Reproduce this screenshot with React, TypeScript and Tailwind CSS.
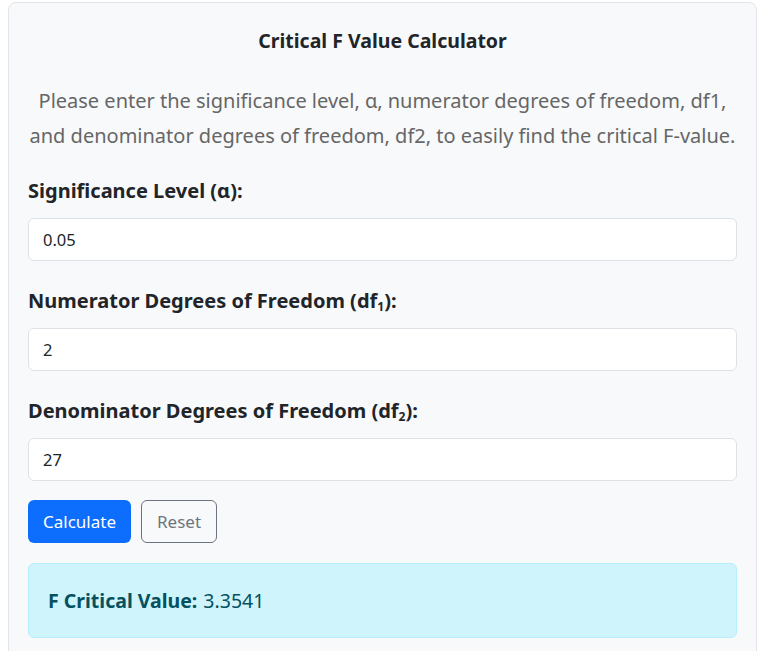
import { useState } from "react";

const font = { fontFamily: '"Noto Sans", "Open Sans", sans-serif' };

function Field({ label, value, onChange, last }: { label: React.ReactNode; value: string; onChange: (v: string) => void; last?: boolean }) {
  return (
    <div className={last ? "mb-[19px]" : "mb-[28px]"}>
      <label className="block text-[20px] leading-[24px] font-bold text-[#212529] mb-[15px]">{label}</label>
      <input
        value={value}
        onChange={(e) => onChange(e.target.value)}
        className="block w-full h-[43px] px-[14px] text-[16.5px] text-[#212529] bg-white border border-[#dee2e6] rounded-[6px] outline-none"
      />
    </div>
  );
}

export default function App() {
  const [alpha, setAlpha] = useState("0.05");
  const [df1, setDf1] = useState("2");
  const [df2, setDf2] = useState("27");

  return (
    <div className="min-h-screen bg-white pt-[2px] px-[8px]" style={font}>
      <div className="w-[749px] bg-[#f8f9fa] border border-[#e3e5e8] rounded-[8px] px-[19px] pt-[26px] pb-[20px]">
        <h2 className="text-center text-[19.5px] leading-[24px] font-bold text-[#212529] mb-[30px]">
          Critical F Value Calculator
        </h2>
        <p className="text-center text-[20px] leading-[35px] text-[#666666] mb-[26px]">
          Please enter the significance level, α, numerator degrees of freedom, df1, and denominator degrees of freedom, df2, to easily find the critical F-value.
        </p>
        <Field label="Significance Level (α):" value={alpha} onChange={setAlpha} />
        <Field label={<>Numerator Degrees of Freedom (df<sub className="text-[12px]">1</sub>):</>} value={df1} onChange={setDf1} />
        <Field label={<>Denominator Degrees of Freedom (df<sub className="text-[12px]">2</sub>):</>} value={df2} onChange={setDf2} last />
        <div className="flex gap-[10px] mb-[20px]">
          <button className="h-[43px] px-[15px] rounded-[6px] bg-[#0d6efd] text-white text-[17px]">Calculate</button>
          <button
            className="h-[43px] px-[15px] rounded-[6px] border border-[#6c757d] text-[#6c757d] text-[17px]"
            onClick={() => { setAlpha(""); setDf1(""); setDf2(""); }}
          >
            Reset
          </button>
        </div>
        <div className="h-[75px] flex items-center px-[19px] bg-[#cff4fc] border border-[#b6effb] rounded-[6px] text-[#055160] text-[19.5px]">
          <span className="font-bold mr-[6px]">F Critical Value:</span>3.3541
        </div>
      </div>
    </div>
  );
}
